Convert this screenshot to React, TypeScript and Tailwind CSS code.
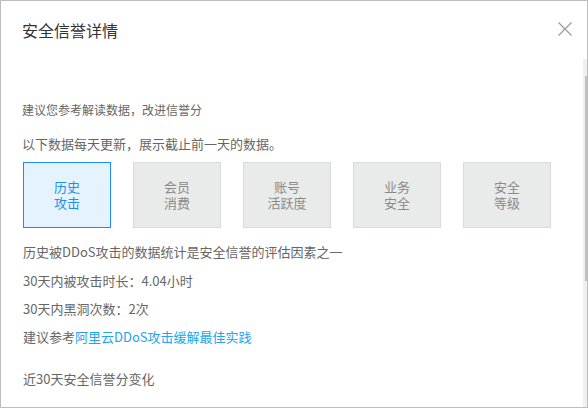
import React from "react";

const FONT = { fontFamily: '"Noto Sans CJK SC", "Noto Sans", sans-serif' };

const TABS = [
  ["历史", "攻击"],
  ["会员", "消费"],
  ["账号", "活跃度"],
  ["业务", "安全"],
  ["安全", "等级"],
];

function CloseIcon() {
  return (
    <svg width="14" height="14" viewBox="0 0 14 14" className="block">
      <path d="M0.5 0.5 L13.5 13.5 M13.5 0.5 L0.5 13.5" stroke="#9a9a9a" strokeWidth="1.2" fill="none" />
    </svg>
  );
}

function Tab({ lines, active }: { lines: string[]; active?: boolean }) {
  return (
    <div
      className={`flex h-[66px] w-[88px] flex-col items-center justify-center border text-[13px] leading-[16px] ${
        active ? "border-[#1a8cff] bg-[#e5f3ff] text-[#1f8ff0]" : "border-[#d9dada] bg-[#e9eaea] text-[#8a8a8a]"
      }`}
    >
      {lines.map((l) => (
        <span key={l} className="block">
          {l}
        </span>
      ))}
    </div>
  );
}

export default function App() {
  return (
    <div className="flex h-[408px] w-[588px] flex-col border border-[#bdbdbd] bg-white" style={FONT}>
      <div className="flex h-[58px] shrink-0 items-start justify-between pl-[21px] pr-[15px]">
        <h1 className="mt-[17px] text-[16px] leading-[24px] text-[#333]">安全信誉详情</h1>
        <button className="mt-[21px]">
          <CloseIcon />
        </button>
      </div>
      <div className="flex min-h-0 flex-1">
        <div className="flex-1 pl-[22px] pt-[42px] text-[#666]">
          <p className="-ml-[1px] text-[12px] leading-[18px]">建议您参考解读数据，改进信誉分</p>
          <p className="-ml-[1px] mt-[16px] text-[13px] leading-[18px]">以下数据每天更新，展示截止前一天的数据。</p>
          <div className="mt-[9px] flex gap-[22px]">
            {TABS.map((t, i) => (
              <Tab key={i} lines={t} active={i === 0} />
            ))}
          </div>
          <p className="mt-[15px] text-[13px] leading-[18px]">历史被DDoS攻击的数据统计是安全信誉的评估因素之一</p>
          <p className="mt-[11px] text-[13px] leading-[18px]">30天内被攻击时长：4.04小时</p>
          <p className="mt-[10px] text-[13px] leading-[18px]">30天内黑洞次数：2次</p>
          <p className="mt-[10px] text-[13px] leading-[18px]">
            建议参考<a className="text-[#22a3f0]">阿里云DDoS攻击缓解最佳实践</a>
          </p>
          <p className="mt-[24px] text-[13px] leading-[18px]">近30天安全信誉分变化</p>
        </div>
        <div className="flex w-[4px] shrink-0 justify-end bg-[#f0f0f0]">
          <div className="mt-[17px] h-[205px] w-[2px] bg-[#c1c1c1]" />
        </div>
      </div>
    </div>
  );
}
